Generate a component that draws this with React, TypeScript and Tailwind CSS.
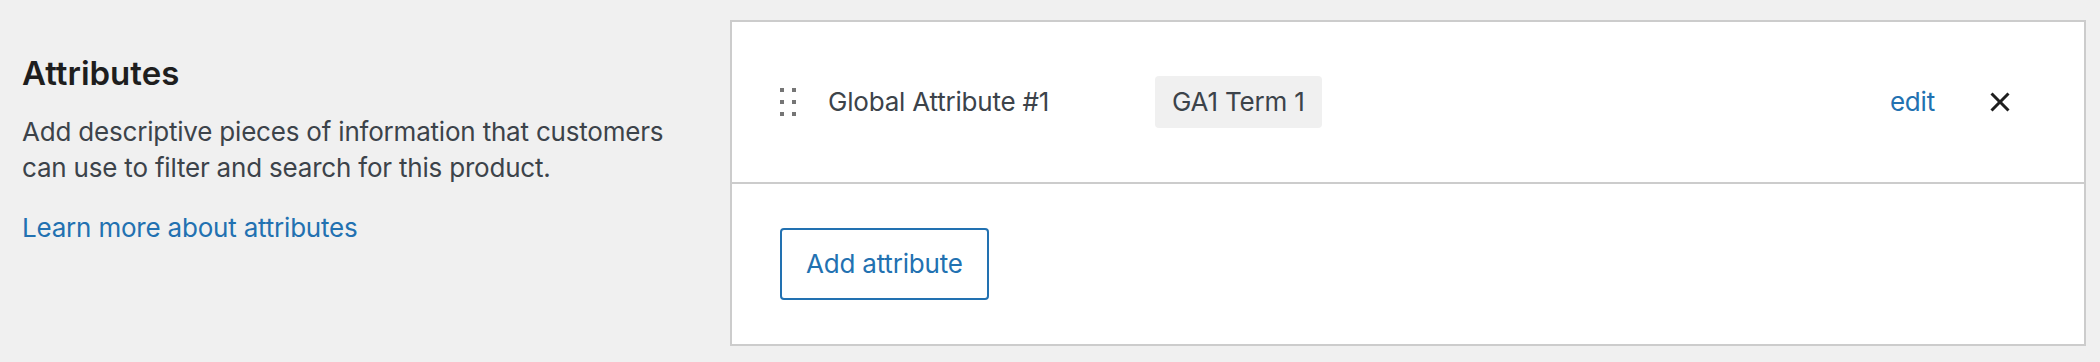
import React from "react";

function DragHandleIcon() {
  return (
    <svg viewBox="0 0 24 24" className="size-[48px] shrink-0 fill-[#757575]" aria-hidden="true">
      <path d="M8 7h2V5H8v2zm0 6h2v-2H8v2zm0 6h2v-2H8v2zm6-14v2h2V5h-2zm0 8h2v-2h-2v2zm0 6h2v-2h-2v2z" />
    </svg>
  );
}

function CloseSmallIcon() {
  return (
    <svg viewBox="0 0 24 24" className="size-[48px] fill-[#1e1e1e]" aria-hidden="true">
      <path d="M12 13.06l3.712 3.713 1.061-1.06L13.061 12l3.712-3.712-1.06-1.06L12 10.938 8.288 7.227l-1.061 1.06L10.939 12l-3.712 3.712 1.06 1.061L12 13.061z" />
    </svg>
  );
}

type Attribute = {
  name: string;
  terms: string[];
};

const attributes: Attribute[] = [{ name: "Global Attribute #1", terms: ["GA1 Term 1"] }];

function AttributeRow({ attribute }: { attribute: Attribute }) {
  return (
    <li className="flex h-[160px] items-center pl-[32px] pr-[60px]">
      <DragHandleIcon />
      <span className="ml-[16px] w-[327px] shrink-0 text-[#3c434a]">{attribute.name}</span>
      <div className="flex flex-1 gap-2">
        {attribute.terms.map((term) => (
          <span key={term} className="rounded-[4px] bg-[#f0f0f0] px-[17px] py-[8px] text-[#3c434a]">
            {term}
          </span>
        ))}
      </div>
      <a href="#" className="px-[2px] text-[#2271b1]">
        edit
      </a>
      <button type="button" aria-label="Remove attribute" className="ml-[39px] flex">
        <CloseSmallIcon />
      </button>
    </li>
  );
}

export default function App() {
  return (
    <div className="flex min-h-[362px] bg-[#f0f0f0] pl-[22px] pr-[14px] pt-[20px] font-['Inter',sans-serif] text-[26px] leading-[36px] tracking-[-0.2px]">
      <div className="w-[708px] shrink-0 pt-[33px]">
        <h2 className="text-[33px] font-semibold leading-[40px] tracking-normal text-[#1e1e1e]">Attributes</h2>
        <p className="mt-[21px] max-w-[690px] text-[#3c434a]">
          Add descriptive pieces of information that customers can use to filter and search for this product.
        </p>
        <a href="#" className="mt-[24px] inline-block text-[#2271b1]">
          Learn more about attributes
        </a>
      </div>

      <div className="h-[326px] flex-1 border-2 border-[#cccccc] bg-white">
        <ul className="border-b-2 border-[#cccccc]">
          {attributes.map((attribute) => (
            <AttributeRow key={attribute.name} attribute={attribute} />
          ))}
        </ul>
        <div className="px-[48px] py-[44px]">
          <button
            type="button"
            className="h-[72px] rounded-[4px] border-2 border-[#2271b1] px-[24px] text-[#2271b1]"
          >
            Add attribute
          </button>
        </div>
      </div>
    </div>
  );
}
